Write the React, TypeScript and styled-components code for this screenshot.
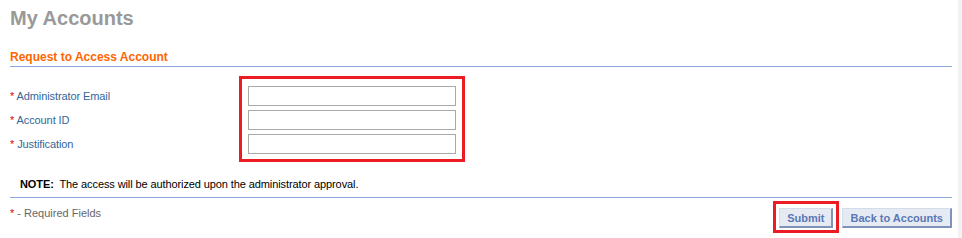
import styled, { createGlobalStyle } from "styled-components";

const GlobalStyle = createGlobalStyle`
  html, body {
    margin: 0;
    padding: 0;
    background: #f2f2f2;
  }
  body {
    font-family: "Liberation Sans", Arial, sans-serif;
  }
`;

const fields = ["Administrator Email", "Account ID", "Justification"];

export default function App() {
  return (
    <>
      <GlobalStyle />
      <Page>
        <Title>My Accounts</Title>
        <SectionHeader>Request to Access Account</SectionHeader>
        <FormRow>
          <LabelColumn>
            {fields.map((f) => (
              <Label key={f}>
                <Star>*</Star> {f}
              </Label>
            ))}
          </LabelColumn>
          <Highlight>
            {fields.map((f) => (
              <TextInput key={f} type="text" aria-label={f} />
            ))}
          </Highlight>
        </FormRow>
        <Note>
          <strong>NOTE:</strong>&nbsp; The access will be authorized upon the
          administrator approval.
        </Note>
        <Footer>
          <Required>
            <Star>*</Star> - Required Fields
          </Required>
          <Actions>
            <ButtonHighlight>
              <Button type="button">Submit</Button>
            </ButtonHighlight>
            <Button type="button">Back to Accounts</Button>
          </Actions>
        </Footer>
      </Page>
    </>
  );
}

const Page = styled.div`
  width: 958px;
  height: 238px;
  box-sizing: border-box;
  background: #fff;
  padding: 6px 6px 0 10px;
`;

const Title = styled.h1`
  margin: 0;
  font-size: 20px;
  line-height: 24px;
  font-weight: bold;
  color: #999;
`;

const SectionHeader = styled.h2`
  margin: 20px 0 0;
  padding-bottom: 2px;
  font-size: 12px;
  line-height: 14px;
  font-weight: bold;
  color: #ff6600;
  border-bottom: 1px solid #8eaadc;
`;

const FormRow = styled.div`
  display: flex;
  margin-top: 9px;
`;

const LabelColumn = styled.div`
  width: 229px;
  display: flex;
  flex-direction: column;
  gap: 4px;
  padding-top: 10px;
`;

const Label = styled.label`
  font-size: 11px;
  line-height: 20px;
  height: 20px;
  color: #336699;
  letter-spacing: -0.1px;
`;

const Star = styled.span`
  color: #e00000;
`;

const Highlight = styled.div`
  display: flex;
  flex-direction: column;
  gap: 4px;
  border: 3px solid #ed1c24;
  padding: 7px 6px 5px 6px;
`;

const TextInput = styled.input`
  width: 208px;
  height: 20px;
  box-sizing: border-box;
  margin: 0;
  border: 1px solid #a9a9a9;
  padding: 0 3px;
  font: 11px "Liberation Sans", Arial, sans-serif;
`;

const Note = styled.div`
  margin-top: 15px;
  padding: 0 0 6px 10px;
  font-size: 11px;
  line-height: 14px;
  color: #000;
  letter-spacing: -0.1px;
  border-bottom: 1px solid #8eaadc;

  strong {
    font-weight: bold;
  }
`;

const Footer = styled.div`
  display: flex;
  justify-content: space-between;
  align-items: flex-start;
  margin-top: 3px;
`;

const Required = styled.div`
  padding-top: 5px;
  font-size: 11px;
  line-height: 14px;
  color: #666;
`;

const Actions = styled.div`
  display: flex;
  align-items: flex-start;
  gap: 3px;
`;

const ButtonHighlight = styled.div`
  border: 3px solid #ed1c24;
  padding: 4px 3px 2px 3px;
  display: flex;
`;

const Button = styled.button`
  height: 20px;
  margin: 0;
  margin-top: 7px;
  padding: 0 7px;
  box-sizing: border-box;
  font: bold 11px "Liberation Sans", Arial, sans-serif;
  color: #5a77b6;
  background: #e6ebf3;
  border: 1px solid;
  border-width: 1px 2px 2px 1px;
  border-color: #d4dcea #7f92b8 #7f92b8 #d4dcea;
  cursor: pointer;

  ${ButtonHighlight} > & {
    margin-top: 0;
  }
`;
